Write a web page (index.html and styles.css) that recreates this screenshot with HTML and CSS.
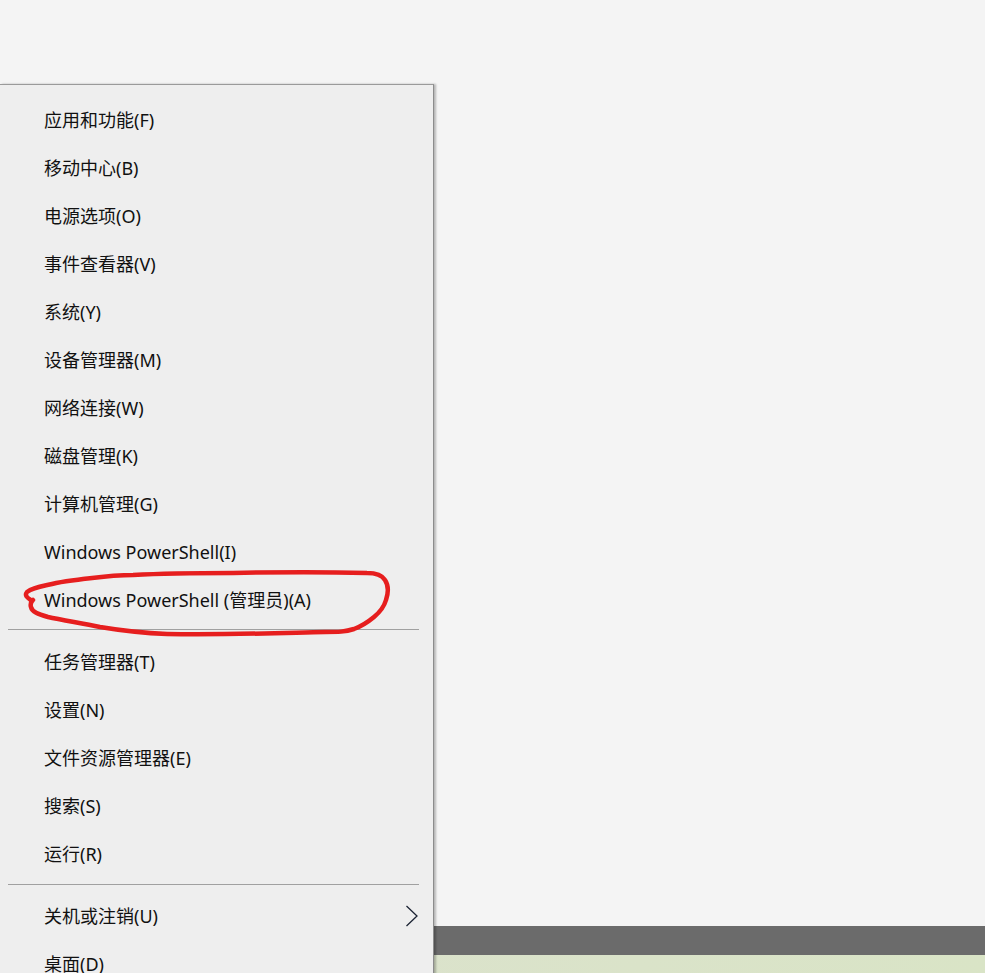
FILE: index.html
```html
<!DOCTYPE html>
<html lang="zh-CN">
<head>
<meta charset="utf-8">
<title>Win+X 菜单</title>
<link rel="stylesheet" href="styles.css">
</head>
<body>
<div class="desktop">
  <div class="workspace"></div>
  <div class="taskbar"></div>
  <div class="wallpaper"></div>
</div>

<nav class="menu">
  <ul class="group">
    <li class="item">应用和功能(F)</li>
    <li class="item">移动中心(B)</li>
    <li class="item">电源选项(O)</li>
    <li class="item">事件查看器(V)</li>
    <li class="item">系统(Y)</li>
    <li class="item">设备管理器(M)</li>
    <li class="item">网络连接(W)</li>
    <li class="item">磁盘管理(K)</li>
    <li class="item">计算机管理(G)</li>
    <li class="item">Windows PowerShell(I)</li>
    <li class="item">Windows PowerShell (管理员)(A)</li>
  </ul>
  <div class="sep sep-first"></div>
  <ul class="group">
    <li class="item">任务管理器(T)</li>
    <li class="item">设置(N)</li>
    <li class="item">文件资源管理器(E)</li>
    <li class="item">搜索(S)</li>
    <li class="item">运行(R)</li>
  </ul>
  <div class="sep sep-second"></div>
  <ul class="group">
    <li class="item has-sub">关机或注销(U)
      <svg class="chevron" width="14" height="22" viewBox="0 0 14 22"><path d="M1.5 1 L12 11 L1.5 21" fill="none" stroke="#1b2333" stroke-width="1.3"/></svg>
    </li>
    <li class="item">桌面(D)</li>
  </ul>
</nav>

<svg class="scribble" width="985" height="973" viewBox="0 0 985 973">
  <path d="M32 601 C28 598 24 596 27 592 C34 587 44 586 52 584 C64 581 70 581 83 579 C100 577 115 575 133 575 C170 573 200 573 233 573 C280 572 330 572 367 573 C376 573 382 575 385 580 C389 586 388 594 386 600 C384 607 380 612 374 617 C368 622 362 626 354 629 C345 632 338 632 325 632 C280 633 230 635 167 634 C140 633 118 630 100 627 C80 623 62 620 48 617 C38 614 32 612 31 607 C30 604 31 602 33 600" fill="none" stroke="#e61e1e" stroke-width="4.5" stroke-linecap="round" stroke-linejoin="round"/>
</svg>
</body>
</html>
```

FILE: styles.css
```css
html, body {
  margin: 0;
  padding: 0;
  height: 100%;
}

body {
  background: #f4f4f4;
  font-family: "Noto Sans", "Noto Sans CJK SC", sans-serif;
  overflow: hidden;
  position: relative;
}

.desktop {
  height: 973px;
  display: flex;
  flex-direction: column;
}

.workspace {
  flex: 1;
  background: #f4f4f4;
}

.taskbar {
  height: 29px;
  background: #6b6b6b;
}

.wallpaper {
  height: 18px;
  background: linear-gradient(90deg, #e6e3dc 0%, #dbe2cc 30%, #d9e4c6 100%);
}

.menu {
  position: absolute;
  left: 0;
  top: 84px;
  width: 434px;
  height: 900px;
  background: #eeeeee;
  border-top: 1px solid #9a9a9a;
  border-right: 1px solid #8c8c8c;
  box-shadow: 2px 0 2px rgba(0, 0, 0, 0.25);
  padding-top: 11px;
  box-sizing: border-box;
}

.group {
  list-style: none;
  margin: 0;
  padding: 0;
}

.item {
  height: 48px;
  line-height: 48px;
  padding-left: 44px;
  font-size: 18px;
  color: #111111;
  position: relative;
  white-space: nowrap;
}

.sep {
  height: 1px;
  background: #a0a0a0;
  margin: 0 14px 0 8px;
}

.sep-first {
  margin-top: 5px;
  margin-bottom: 8px;
}

.sep-second {
  margin-top: 6px;
  margin-bottom: 7px;
}

.has-sub {
  display: flex;
  align-items: center;
  justify-content: space-between;
  padding-right: 14px;
}

.chevron {
  display: block;
}

.scribble {
  position: absolute;
  left: 0;
  top: 0;
  pointer-events: none;
}
```
